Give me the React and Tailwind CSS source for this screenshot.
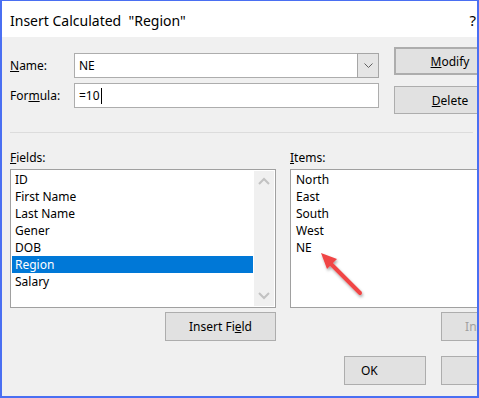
import React from "react";

const font = { fontFamily: '"Segoe UI", "Noto Sans", "Open Sans", sans-serif' };

function Btn({ children, className = "" }) {
  return (
    <div
      className={
        "flex items-center justify-center bg-[#e1e1e1] border border-[#adadad] text-[12px] text-black shrink-0 " +
        className
      }
    >
      {children}
    </div>
  );
}

function Chevron({ up, className = "" }) {
  return (
    <svg width="12" height="8" viewBox="0 0 12 8" className={className}>
      <path
        d={up ? "M1 7 L6 2 L11 7" : "M1 1 L6 6 L11 1"}
        fill="none"
        stroke="#c2c2c2"
        strokeWidth="2"
      />
    </svg>
  );
}

export default function App() {
  const fields = ["ID", "First Name", "Last Name", "Gener", "DOB", "Region", "Salary"];
  const items = ["North", "East", "South", "West", "NE"];
  return (
    <div
      className="relative w-[479px] h-[398px] overflow-hidden bg-[#f0f0f0] border-t border-l-2 border-r-2 border-b-2 border-[#4a6ff2] flex flex-col"
      style={font}
    >
      {/* Title bar */}
      <div className="h-[36px] bg-white flex items-center justify-between pl-[8px] pr-[1px] shrink-0">
        <span className="text-[14px] text-black whitespace-pre leading-none mt-[3px]">
          Insert Calculated  "Region"
        </span>
        <span className="text-[15px] text-black leading-none mt-[3px]">?</span>
      </div>

      {/* Top section */}
      <div className="h-[95px] flex items-start shrink-0">
        <div className="pl-[8px] pt-[16px] flex flex-col gap-[5px]">
          <div className="flex items-center h-[25px]">
            <span className="w-[64px] text-[12px] text-black">
              <u>N</u>ame:
            </span>
            <div className="w-[305px] h-[25px] bg-white border border-[#adadad] flex items-center">
              <span className="flex-1 pl-[4px] text-[12px] text-black">NE</span>
              <div className="w-[22px] h-[25px] -mr-px bg-[#e5e5e5] border border-[#a6a6a6] flex items-center justify-center">
                <svg width="9" height="6" viewBox="0 0 9 6">
                  <path d="M0.5 0.5 L4.5 4.5 L8.5 0.5" fill="none" stroke="#606060" strokeWidth="1" />
                </svg>
              </div>
            </div>
          </div>
          <div className="flex items-center h-[25px]">
            <span className="w-[64px] text-[12px] text-black">
              For<u>m</u>ula:
            </span>
            <div className="w-[305px] h-[25px] bg-white border border-[#adadad] flex items-center">
              <span className="pl-[4px] text-[12px] text-black">=10</span>
              <span className="w-px h-[16px] bg-black ml-px" />
            </div>
          </div>
        </div>
        <div className="ml-[15px] pt-[10px] flex flex-col gap-[11px]">
          <Btn className="w-[112px] h-[28px] border-2 border-[#0078d7]">
            <span className="mt-[2px]">
              <u>M</u>odify
            </span>
          </Btn>
          <Btn className="w-[112px] h-[28px]">
            <span className="mt-[2px]">
              <u>D</u>elete
            </span>
          </Btn>
        </div>
      </div>

      {/* Separator */}
      <div className="h-px bg-[#dcdcdc] ml-[8px] mr-[4px] shrink-0" />

      {/* Lists */}
      <div className="flex items-start pl-[8px] pt-[17px] gap-[14px]">
        <div className="flex flex-col w-[266px] shrink-0">
          <span className="text-[12px] text-black h-[19px] leading-[16px]">
            <u>F</u>ields:
          </span>
          <div className="h-[139px] bg-white border border-[#a0a0a0] flex p-px">
            <div className="flex-1 flex flex-col">
              {fields.map((f) => (
                <div
                  key={f}
                  className={
                    "h-[17px] flex items-center pl-[3px] text-[12px] " +
                    (f === "Region" ? "bg-[#0078d7] text-white" : "text-black")
                  }
                >
                  {f}
                </div>
              ))}
            </div>
            <div className="w-[20px] bg-[#f0f0f0] flex flex-col items-center justify-between py-[6px] ml-px">
              <Chevron up />
              <Chevron />
            </div>
          </div>
          <div className="flex justify-end pt-[4px]">
            <Btn className="w-[111px] h-[29px]">
              Insert Fi<u>e</u>ld
            </Btn>
          </div>
        </div>

        <div className="flex flex-col w-[266px] shrink-0">
          <span className="text-[12px] text-black h-[19px] leading-[16px]">
            <u>I</u>tems:
          </span>
          <div className="h-[139px] bg-white border border-[#a0a0a0] flex flex-col p-px">
            {items.map((f) => (
              <div key={f} className="h-[17px] flex items-center pl-[4px] text-[12px] text-black">
                {f}
              </div>
            ))}
          </div>
          <div className="flex pt-[4px] pl-[151px]">
            <Btn className="w-[111px] h-[29px] text-[#a0a0a0]">
              <span className="text-[#a0a0a0]">Insert Item</span>
            </Btn>
          </div>
        </div>
      </div>

      {/* Bottom buttons */}
      <div className="flex pl-[342px] pt-[15px] gap-[15px]">
        <Btn className="w-[82px] h-[29px] !justify-start pl-[16px]">OK</Btn>
        <Btn className="w-[82px] h-[29px]" />
      </div>

      {/* Red arrow annotation */}
      <svg
        className="absolute left-0 top-0 pointer-events-none"
        width="479"
        height="398"
        viewBox="0 0 479 398"
      >
        <defs>
          <filter id="sh" x="-20%" y="-20%" width="140%" height="140%">
            <feDropShadow dx="1" dy="2" stdDeviation="1.5" floodColor="#000" floodOpacity="0.35" />
          </filter>
        </defs>
        <g filter="url(#sh)">
          <line x1="358" y1="292" x2="326" y2="260" stroke="#f04444" strokeWidth="4" strokeLinecap="round" />
          <polygon points="319,252 335,258 325,268" fill="#f04444" />
        </g>
      </svg>
    </div>
  );
}
